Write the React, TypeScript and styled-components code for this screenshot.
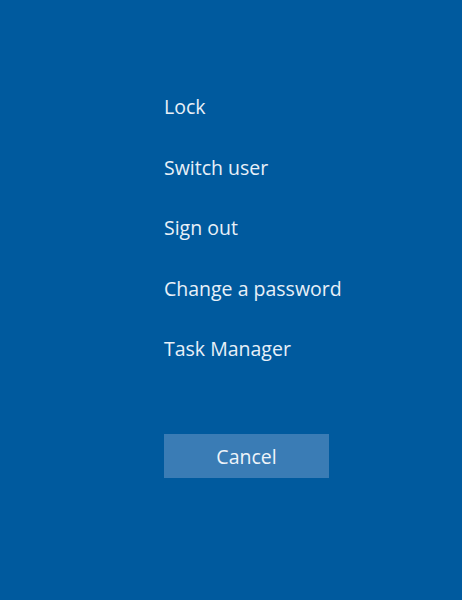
import React from 'react';
import styled, { createGlobalStyle } from 'styled-components';

const GlobalStyle = createGlobalStyle`
  html, body {
    margin: 0;
    padding: 0;
    background: #005a9e;
  }
`;

const Screen = styled.div`
  background: #005a9e;
  box-sizing: border-box;
  display: flex;
  flex-direction: column;
  height: 600px;
  padding: 93px 0 0 164px;
  width: 462px;
`;

const Options = styled.ul`
  display: flex;
  flex-direction: column;
  gap: 33.5px;
  list-style: none;
  margin: 0;
  padding: 0;
`;

const Option = styled.li`
  color: #e8f0f8;
  cursor: pointer;
  font-family: 'Open Sans', 'Noto Sans', sans-serif;
  font-size: 19.5px;
  line-height: 27px;
`;

const CancelButton = styled.button`
  background: #3a7cb5;
  border: 0;
  color: #eef4fa;
  cursor: pointer;
  font-family: 'Open Sans', 'Noto Sans', sans-serif;
  font-size: 19.5px;
  height: 44px;
  margin-top: 72px;
  padding: 0;
  width: 165px;
`;

const OPTIONS = ['Lock', 'Switch user', 'Sign out', 'Change a password', 'Task Manager'];

export default function App() {
  return (
    <>
      <GlobalStyle />
      <Screen>
        <Options>
          {OPTIONS.map(label => (
            <Option key={label}>{label}</Option>
          ))}
        </Options>
        <CancelButton type="button">Cancel</CancelButton>
      </Screen>
    </>
  );
}
